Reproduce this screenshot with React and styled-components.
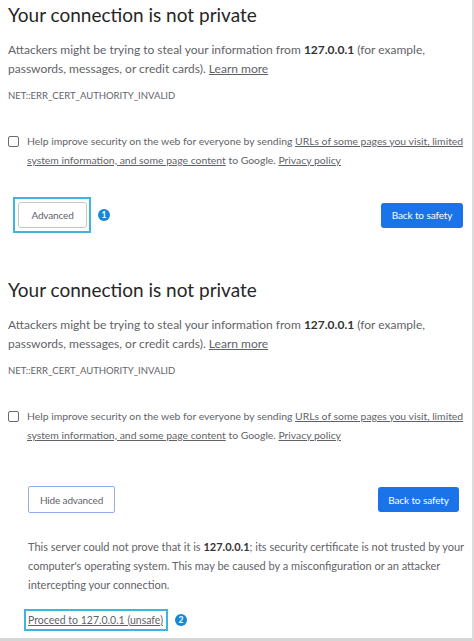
import React from 'react';
import styled, { createGlobalStyle } from 'styled-components';

const GlobalStyle = createGlobalStyle`
  html, body {
    margin: 0;
    padding: 0;
    background: #fff;
  }
  body {
    font-family: Lato, "Open Sans", sans-serif;
  }
`;

const Frame = styled.div`
  width: 474px;
  height: 641px;
  box-sizing: border-box;
  border-right: 2px solid #dcdcdc;
  border-bottom: 3px solid #d6d6d6;
  overflow: hidden;
`;

const Panel = styled.section`
  padding: ${p => p.$top}px 8px 0 8px;
`;

const Title = styled.h1`
  margin: 0;
  font-size: 19px;
  font-weight: 400;
  line-height: 26px;
  color: #262626;
`;

const Text = styled.p`
  margin: ${p => p.$margin || '0'};
  font-size: ${p => p.$size || 12}px;
  line-height: ${p => p.$lh || 18.5}px;
  color: #5f6368;
  padding-left: ${p => p.$indent || 0}px;
  margin-right: ${p => p.$overhang || 0}px;

  b {
    color: #333;
    font-weight: 700;
  }
`;

const Link = styled.a`
  color: #5f6368;
  text-decoration: underline;
  cursor: pointer;
`;

const Code = styled.div`
  margin-top: 11px;
  font-size: 9.5px;
  line-height: 14px;
  color: #5f6368;
`;

const CheckRow = styled.label`
  display: flex;
  align-items: flex-start;
  gap: 8px;
  margin-top: 29px;
  margin-right: -8px;
`;

const Box = styled.span`
  flex: none;
  width: 9px;
  height: 9px;
  margin-top: 4px;
  border: 1px solid #6b6b6b;
  border-radius: 2px;
`;

const ButtonRow = styled.div`
  display: flex;
  align-items: center;
  justify-content: space-between;
  margin-top: ${p => p.$top}px;
  padding-left: ${p => p.$indent}px;
  padding-right: ${p => p.$right}px;
`;

const Left = styled.div`
  display: flex;
  align-items: center;
  gap: 7px;
`;

const Highlight = styled.div`
  border: 2px solid #3fb4dd;
  padding: 3px 2px 3px 3px;
`;

const Secondary = styled.button`
  display: block;
  font-family: inherit;
  font-size: 10px;
  letter-spacing: -0.15px;
  color: #5f6368;
  background: #fff;
  border: 1px solid ${p => p.$border || '#c8c8c8'};
  border-radius: ${p => p.$radius || 3}px;
  height: ${p => p.$h}px;
  width: ${p => p.$w}px;
  padding: 0;
`;

const Primary = styled.button`
  display: block;
  font-family: inherit;
  font-size: 10px;
  letter-spacing: -0.1px;
  color: #fff;
  background: #1a73e8;
  border: none;
  border-radius: 3px;
  height: ${p => p.$h}px;
  width: ${p => p.$w}px;
  padding: 0;
`;

const Badge = styled.span`
  display: inline-flex;
  align-items: center;
  justify-content: center;
  width: 12px;
  height: 12px;
  border-radius: 50%;
  background: #1588d8;
  color: #fff;
  font-size: 8.5px;
  font-weight: 700;
  line-height: 1;
`;

const ProceedRow = styled.div`
  display: flex;
  align-items: center;
  gap: 7px;
  margin-top: 15px;
  padding-left: 16px;
`;

const ProceedLink = styled.a`
  display: block;
  border: 2px solid #3fb4dd;
  padding: 1px 3px 1px 2px;
  font-size: 10.5px;
  line-height: 16px;
  color: #5f6368;
  text-decoration: underline;
`;

function Intro() {
  return (
    <>
      <Title>Your connection is not private</Title>
      <Text $margin="13px 0 0 0">
        Attackers might be trying to steal your information from <b>127.0.0.1</b> (for example,
        passwords, messages, or credit cards). <Link>Learn more</Link>
      </Text>
      <Code>NET::ERR_CERT_AUTHORITY_INVALID</Code>
    </>
  );
}

function Reporting() {
  return (
    <CheckRow>
      <Box />
      <Text $size={10.4}>
        Help improve security on the web for everyone by sending{' '}
        <Link>URLs of some pages you visit, limited system information, and some page content</Link>{' '}
        to Google. <Link>Privacy policy</Link>
      </Text>
    </CheckRow>
  );
}

export default function App() {
  return (
    <>
      <GlobalStyle />
      <Frame>
        <Panel $top={2}>
          <Intro />
          <Reporting />
          <ButtonRow $top={28} $indent={5} $right={1}>
            <Left>
              <Highlight>
                <Secondary $w={69} $h={26}>Advanced</Secondary>
              </Highlight>
              <Badge>1</Badge>
            </Left>
            <Primary $w={82} $h={25}>Back to safety</Primary>
          </ButtonRow>
        </Panel>
        <Panel $top={44}>
          <Intro />
          <Reporting />
          <ButtonRow $top={42} $indent={20} $right={5}>
            <Secondary $w={87} $h={27} $border="#8fb0e6" $radius={2}>Hide advanced</Secondary>
            <Primary $w={81} $h={25}>Back to safety</Primary>
          </ButtonRow>
          <Text $margin="24px 0 0 0" $indent={20} $size={11} $lh={19} $overhang={-6}>
            This server could not prove that it is <b>127.0.0.1</b>; its security certificate is not trusted by your
            computer's operating system. This may be caused by a misconfiguration or an attacker
            intercepting your connection.
          </Text>
          <ProceedRow>
            <ProceedLink>Proceed to 127.0.0.1 (unsafe)</ProceedLink>
            <Badge>2</Badge>
          </ProceedRow>
        </Panel>
      </Frame>
    </>
  );
}
